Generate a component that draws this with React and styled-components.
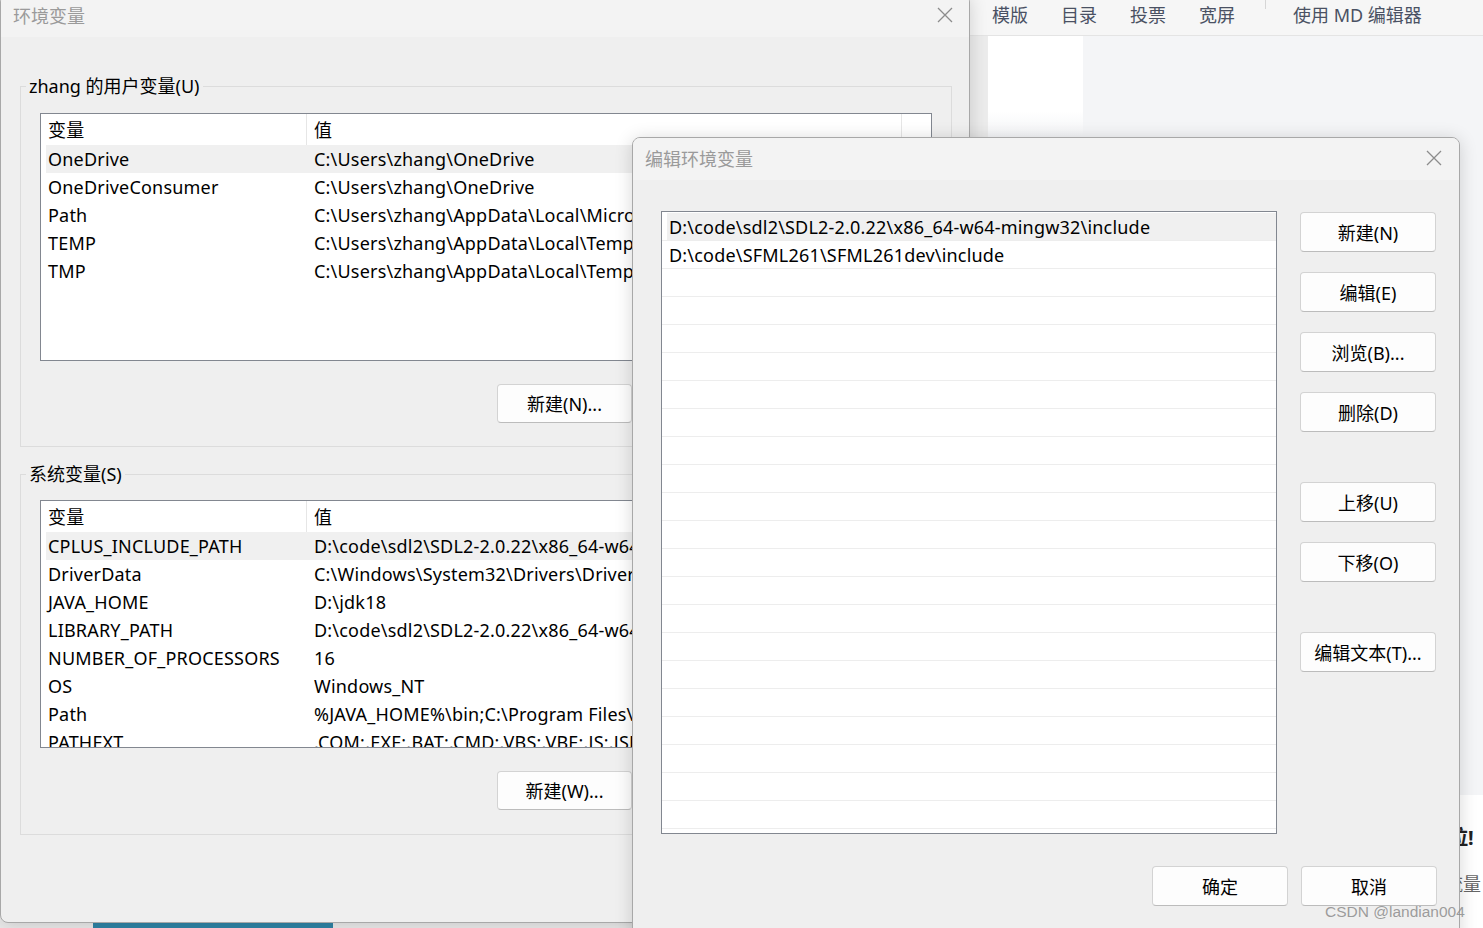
import React from 'react';
import styled, { createGlobalStyle } from 'styled-components';

const GlobalStyle = createGlobalStyle`
  html, body {
    margin: 0;
    padding: 0;
  }
  body {
    font-family: "Noto Sans", "Noto Sans CJK SC", sans-serif;
    overflow: hidden;
  }
  * {
    box-sizing: border-box;
  }
`;

const Desktop = styled.div`
  position: relative;
  width: 1483px;
  height: 928px;
  overflow: hidden;
  background: #f4f5f7;
`;

/* ---------- page behind the dialogs ---------- */

const Page = styled.div`
  display: flex;
  flex-direction: column;
  height: 100%;
`;

const NavBar = styled.div`
  height: 36px;
  flex-shrink: 0;
  display: flex;
  align-items: flex-start;
  gap: 33px;
  padding-left: 992px;
  background: #f6f6f6;
  border-bottom: 1px solid #e4e4e4;
  font-size: 18px;
  color: #4a5163;
`;

const NavItem = styled.span`
  line-height: 24px;
  padding-top: 3px;
  white-space: nowrap;
`;

const NavSep = styled.span`
  width: 1px;
  height: 9px;
  background: #d6d6d6;
  margin: 0 -6px 0 -3px;
`;

const Content = styled.div`
  flex: 1;
  display: flex;
  align-items: flex-start;
`;

const Gutter = styled.div`
  width: 988px;
  height: 100%;
  background: #ececec;
`;

const WhiteColumn = styled.div`
  width: 95px;
  height: 100px;
  background: linear-gradient(#ffffff 75%, #f4f5f7);
`;

const Lower = styled.div`
  height: 133px;
  flex-shrink: 0;
  display: flex;
`;

const LowerLeft = styled.div`
  flex: 1;
  display: flex;
  align-items: flex-end;
  padding-left: 93px;
  background: #ebebeb;
`;

const BlueBar = styled.div`
  width: 240px;
  height: 8px;
  background: #2f84a6;
`;

const LowerRight = styled.div`
  width: 60px;
  background: #ffffff;
  padding: 29px 0 0 25px;
  white-space: nowrap;
`;

const Headline = styled.div`
  font-size: 20px;
  line-height: 28px;
  font-weight: 700;
  color: #222;
`;

const SubLine = styled.div`
  font-size: 18px;
  line-height: 24px;
  margin: 20px 0 0 -3px;
  color: #666;
`;

/* ---------- windows ---------- */

const Window = styled.div`
  position: absolute;
  left: ${p => p.$x}px;
  top: ${p => p.$y}px;
  width: ${p => p.$w}px;
  height: ${p => p.$h}px;
  display: flex;
  flex-direction: column;
  background: #efefef;
  border: 1px solid #a8a8a8;
  border-radius: 8px;
  box-shadow: 0 2px 18px rgba(0, 0, 0, 0.16);
  overflow: hidden;
`;

const TitleBar = styled.div`
  height: 42px;
  flex-shrink: 0;
  display: flex;
  align-items: center;
  justify-content: space-between;
  padding: 0 ${p => p.$pr}px 2px 12px;
  background: #f3f3f3;
  color: #9a9a9a;
  font-size: 18px;
`;

const CloseIcon = () => (
  <svg width="16" height="16" viewBox="0 0 16 16">
    <path d="M1 1 L15 15 M15 1 L1 15" stroke="#8c8c8c" strokeWidth="1.3" fill="none" />
  </svg>
);

const EnvBody = styled.div`
  flex: 1;
  padding: 37px 17px 0 19px;
`;

const Group = styled.fieldset`
  margin: ${p => p.$mt || 0}px 0 0;
  padding: 0;
  border: 1px solid #dcdcdc;
`;

const Legend = styled.legend`
  margin-left: 5px;
  padding: 0 3px;
  font-size: 18px;
  line-height: 24px;
  color: #000;
`;

const GroupInner = styled.div`
  padding: ${p => p.$pt}px 19px ${p => p.$pb}px 19px;
`;

const Table = styled.div`
  height: 248px;
  background: #fff;
  border: 1px solid #828790;
  overflow: hidden;
  font-size: 18px;
  letter-spacing: 0.2px;
  color: #000;
`;

const HeadRow = styled.div`
  display: flex;
  height: 31px;
`;

const HeadCell = styled.div`
  width: ${p => p.$w}px;
  flex-shrink: 0;
  padding: 2px 0 0 7px;
  line-height: 29px;
  border-right: 1px solid #e6e6e6;
`;

const Row = styled.div`
  display: grid;
  grid-template-columns: 266px 1fr;
  height: 28px;
  line-height: 28px;
  white-space: nowrap;
  background: ${p => (p.$selected ? '#f0f0f0' : '#fff')};
  box-shadow: inset 5px 0 0 #fff;
`;

const Cell = styled.div`
  padding-left: ${p => p.$pl}px;
  overflow: hidden;
`;

const ButtonRow = styled.div`
  display: flex;
  justify-content: flex-end;
  gap: 15px;
  margin-top: 23px;
`;

const Button = styled.button`
  width: ${p => p.$w || 136}px;
  height: ${p => p.$h || 40}px;
  margin-top: ${p => p.$mt || 0}px;
  padding: 0 0 1px;
  font-family: inherit;
  font-size: 18px;
  color: #000;
  background: #fdfdfd;
  border: 1px solid #d3d3d3;
  border-bottom-color: #bcbcbc;
  border-radius: 4px;
`;

/* ---------- edit dialog ---------- */

const EditBody = styled.div`
  flex: 1;
  display: flex;
  flex-direction: column;
  padding: 31px 22px 0 28px;
`;

const EditTop = styled.div`
  display: flex;
  gap: 23px;
`;

const ListBox = styled.div`
  width: 616px;
  height: 623px;
  padding-top: 1px;
  background: #fff;
  border: 1px solid #828790;
  overflow: hidden;
  font-size: 18px;
  letter-spacing: 0.2px;
  color: #000;
`;

const ListRow = styled.div`
  height: 28px;
  line-height: 29px;
  padding-left: 7px;
  white-space: nowrap;
  border-bottom: 1px solid #ededed;
  background: ${p => (p.$selected ? '#f0f0f0' : '#fff')};
  box-shadow: inset 5px 0 0 #fff;
`;

const SideButtons = styled.div`
  display: flex;
  flex-direction: column;
  gap: 20px;
  padding-top: 1px;
`;

const FootButtons = styled.div`
  display: flex;
  justify-content: flex-end;
  gap: 13px;
  margin-top: 32px;
`;

const Watermark = styled.div`
  position: absolute;
  left: 1325px;
  top: 902px;
  font-family: "Liberation Sans", Arial, sans-serif;
  font-size: 15.5px;
  line-height: 20px;
  color: rgba(140, 140, 140, 0.85);
  white-space: nowrap;
`;

const userVars = [
  ['OneDrive', 'C:\\Users\\zhang\\OneDrive'],
  ['OneDriveConsumer', 'C:\\Users\\zhang\\OneDrive'],
  ['Path', 'C:\\Users\\zhang\\AppData\\Local\\Microsoft\\WindowsApps;'],
  ['TEMP', 'C:\\Users\\zhang\\AppData\\Local\\Temp'],
  ['TMP', 'C:\\Users\\zhang\\AppData\\Local\\Temp'],
];

const systemVars = [
  ['CPLUS_INCLUDE_PATH', 'D:\\code\\sdl2\\SDL2-2.0.22\\x86_64-w64-mingw32\\include;D:\\code\\SFML261\\SFML261dev\\include'],
  ['DriverData', 'C:\\Windows\\System32\\Drivers\\DriverData'],
  ['JAVA_HOME', 'D:\\jdk18'],
  ['LIBRARY_PATH', 'D:\\code\\sdl2\\SDL2-2.0.22\\x86_64-w64-mingw32\\lib;D:\\code\\SFML261\\SFML261dev\\lib'],
  ['NUMBER_OF_PROCESSORS', '16'],
  ['OS', 'Windows_NT'],
  ['Path', '%JAVA_HOME%\\bin;C:\\Program Files\\Common Files\\Oracle\\Java\\javapath;'],
  ['PATHEXT', '.COM;.EXE;.BAT;.CMD;.VBS;.VBE;.JS;.JSE;.WSF;.WSH;.MSC'],
];

const paths = [
  'D:\\code\\sdl2\\SDL2-2.0.22\\x86_64-w64-mingw32\\include',
  'D:\\code\\SFML261\\SFML261dev\\include',
];

const VarTable = ({ rows }) => (
  <Table>
    <HeadRow>
      <HeadCell $w={266}>变量</HeadCell>
      <HeadCell $w={595}>值</HeadCell>
    </HeadRow>
    {rows.map(([name, value], i) => (
      <Row key={name} $selected={i === 0}>
        <Cell $pl={7}>{name}</Cell>
        <Cell $pl={7}>{value}</Cell>
      </Row>
    ))}
  </Table>
);

const App = () => {
  const listRows = Array.from({ length: 22 }, (_, i) => paths[i] || '');

  return (
    <>
      <GlobalStyle />
      <Desktop>
        <Page>
          <NavBar>
            <NavItem>模版</NavItem>
            <NavItem>目录</NavItem>
            <NavItem>投票</NavItem>
            <NavItem>宽屏</NavItem>
            <NavSep />
            <NavItem>使用 MD 编辑器</NavItem>
          </NavBar>
          <Content>
            <Gutter />
            <WhiteColumn />
          </Content>
          <Lower>
            <LowerLeft>
              <BlueBar />
            </LowerLeft>
            <LowerRight>
              <Headline>拉!</Headline>
              <SubLine>流量</SubLine>
            </LowerRight>
          </Lower>
        </Page>

        <Window $x={0} $y={-6} $w={970} $h={929}>
          <TitleBar $pr={16}>
            <span>环境变量</span>
            <CloseIcon />
          </TitleBar>
          <EnvBody>
            <Group>
              <Legend>zhang 的用户变量(U)</Legend>
              <GroupInner $pt={15} $pb={23}>
                <VarTable rows={userVars} />
                <ButtonRow>
                  <Button $w={135} $h={39}>新建(N)...</Button>
                  <Button $w={135} $h={39}>编辑(E)...</Button>
                  <Button $w={135} $h={39}>删除(D)</Button>
                </ButtonRow>
              </GroupInner>
            </Group>
            <Group $mt={15}>
              <Legend>系统变量(S)</Legend>
              <GroupInner $pt={14} $pb={24}>
                <VarTable rows={systemVars} />
                <ButtonRow>
                  <Button $w={135} $h={39}>新建(W)...</Button>
                  <Button $w={135} $h={39}>编辑(I)...</Button>
                  <Button $w={135} $h={39}>删除(L)</Button>
                </ButtonRow>
              </GroupInner>
            </Group>
          </EnvBody>
        </Window>

        <Window $x={632} $y={137} $w={828} $h={820}>
          <TitleBar $pr={17}>
            <span>编辑环境变量</span>
            <CloseIcon />
          </TitleBar>
          <EditBody>
            <EditTop>
              <ListBox>
                {listRows.map((text, i) => (
                  <ListRow key={i} $selected={i === 0}>{text}</ListRow>
                ))}
              </ListBox>
              <SideButtons>
                <Button>新建(N)</Button>
                <Button>编辑(E)</Button>
                <Button>浏览(B)...</Button>
                <Button>删除(D)</Button>
                <Button $mt={30}>上移(U)</Button>
                <Button>下移(O)</Button>
                <Button $mt={30}>编辑文本(T)...</Button>
              </SideButtons>
            </EditTop>
            <FootButtons>
              <Button>确定</Button>
              <Button>取消</Button>
            </FootButtons>
          </EditBody>
        </Window>

        <Watermark>CSDN @landian004</Watermark>
      </Desktop>
    </>
  );
};

export default App;
